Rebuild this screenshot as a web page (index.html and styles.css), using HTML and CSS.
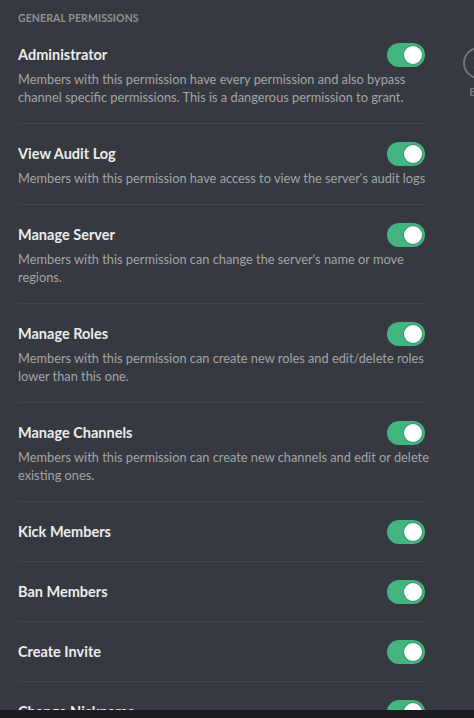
FILE: index.html
```html
<!DOCTYPE html>
<html lang="en">
<head>
<meta charset="utf-8">
<title>General Permissions</title>
<link rel="stylesheet" href="styles.css">
</head>
<body>
<div class="screen">
  <div class="viewport">
    <main class="perms">
      <h2 class="section-title">General Permissions</h2>

      <div class="perm">
        <div class="perm-head"><span class="perm-name">Administrator</span><span class="toggle"><span class="knob"></span></span></div>
        <p class="perm-desc">Members with this permission have every permission and also bypass channel specific permissions. This is a dangerous permission to grant.</p>
      </div>

      <div class="perm">
        <div class="perm-head"><span class="perm-name">View Audit Log</span><span class="toggle"><span class="knob"></span></span></div>
        <p class="perm-desc">Members with this permission have access to view the server's audit logs</p>
      </div>

      <div class="perm">
        <div class="perm-head"><span class="perm-name">Manage Server</span><span class="toggle"><span class="knob"></span></span></div>
        <p class="perm-desc">Members with this permission can change the server's name or move regions.</p>
      </div>

      <div class="perm">
        <div class="perm-head"><span class="perm-name">Manage Roles</span><span class="toggle"><span class="knob"></span></span></div>
        <p class="perm-desc">Members with this permission can create new roles and edit/delete roles lower than this one.</p>
      </div>

      <div class="perm">
        <div class="perm-head"><span class="perm-name">Manage Channels</span><span class="toggle"><span class="knob"></span></span></div>
        <p class="perm-desc">Members with this permission can create new channels and edit or delete existing ones.</p>
      </div>

      <div class="perm">
        <div class="perm-head"><span class="perm-name">Kick Members</span><span class="toggle"><span class="knob"></span></span></div>
      </div>

      <div class="perm">
        <div class="perm-head"><span class="perm-name">Ban Members</span><span class="toggle"><span class="knob"></span></span></div>
      </div>

      <div class="perm">
        <div class="perm-head"><span class="perm-name">Create Invite</span><span class="toggle"><span class="knob"></span></span></div>
      </div>

      <div class="perm">
        <div class="perm-head"><span class="perm-name">Change Nickname</span><span class="toggle"><span class="knob"></span></span></div>
      </div>
    </main>

    <aside class="tools">
      <div class="close-btn">
        <svg viewBox="0 0 24 24" width="16" height="16" aria-hidden="true"><path d="M18.4 4 12 10.4 5.6 4 4 5.6 10.4 12 4 18.4 5.6 20 12 13.6 18.4 20 20 18.4 13.6 12 20 5.6z" fill="#b9bbbe"/></svg>
      </div>
      <div class="close-label">ESC</div>
    </aside>
  </div>
  <div class="bottom-bar"></div>
</div>
</body>
</html>
```

FILE: styles.css
```css
html, body {
  margin: 0;
  padding: 0;
  background: #36393f;
}

body {
  width: 474px;
  height: 718px;
  overflow: hidden;
  font-family: "Lato", "Noto Sans", sans-serif;
}

.screen {
  display: flex;
  flex-direction: column;
  height: 718px;
}

.viewport {
  flex: 1 1 auto;
  min-height: 0;
  overflow: hidden;
  display: flex;
  align-items: flex-start;
}

.perms {
  flex: 0 0 407px;
  padding-left: 18px;
}

.section-title {
  margin: 12px 0 0;
  font-size: 10.5px;
  line-height: 13px;
  font-weight: 700;
  text-transform: uppercase;
  letter-spacing: 0.1px;
  color: #8e9297;
}

.perm {
  padding: 20px 0 19px;
  border-bottom: 1px solid #42454a;
}

.perm-head {
  display: flex;
  align-items: center;
  justify-content: space-between;
  height: 20px;
}

.perm-name {
  font-size: 14.5px;
  line-height: 20px;
  font-weight: 700;
  color: #ebeced;
}

.perm-desc {
  margin: 5px -6px -2px 0;
  font-size: 12.8px;
  line-height: 18px;
  color: #a2a5a9;
}

.toggle {
  position: relative;
  flex: 0 0 auto;
  width: 38px;
  height: 24px;
  border-radius: 12px;
  background: #43b581;
}

.knob {
  position: absolute;
  top: 3px;
  right: 3px;
  width: 18px;
  height: 18px;
  border-radius: 50%;
  background: #ffffff;
  box-shadow: 0 0 0 1px #3a9a6e;
}

.tools {
  flex: 0 0 40px;
  margin-left: 38px;
  padding-top: 47px;
  display: flex;
  flex-direction: column;
  align-items: flex-start;
}

.close-btn {
  box-sizing: border-box;
  width: 32px;
  height: 32px;
  border: 2px solid #72767d;
  border-radius: 50%;
  display: flex;
  align-items: center;
  justify-content: center;
}

.close-label {
  width: 32px;
  margin-top: 6px;
  text-align: center;
  font-size: 11px;
  line-height: 14px;
  font-weight: 700;
  color: #72767d;
}

.bottom-bar {
  flex: 0 0 8px;
  background: #1b1c1f;
}
```
